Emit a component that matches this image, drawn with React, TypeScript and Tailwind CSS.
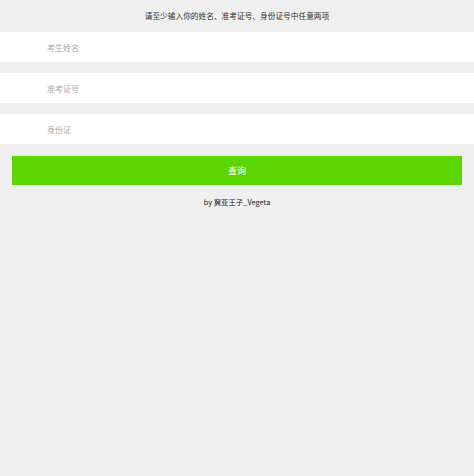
import React from "react";

export default function App() {
  return (
    <div className="min-h-[476px] w-full bg-[#efefef] font-['Noto_Sans_CJK_SC',sans-serif]">
      <div className="flex h-[32px] items-center justify-center text-[7.7px] text-[#333]">
        请至少输入你的姓名、准考证号、身份证号中任意两项
      </div>
      <div className="flex flex-col gap-[11px]">
        {["考生姓名", "准考证号", "身份证"].map((p) => (
          <div key={p} className="flex h-[30px] items-center bg-white pl-[47px] pt-[1px]">
            <input
              className="w-full bg-transparent text-[8px] text-[#333] outline-none placeholder:text-[#aaa] font-['Noto_Sans_CJK_SC',sans-serif]"
              placeholder={p}
            />
          </div>
        ))}
      </div>
      <div className="px-[12px] pt-[12px]">
        <button className="flex h-[29px] w-full items-center justify-center bg-[#5cd600] pt-[1px] text-[9px] text-white font-['Noto_Sans_CJK_SC',sans-serif]">
          查询
        </button>
      </div>
      <div className="flex h-[34px] items-center justify-center text-[7.4px] text-[#222]">
        by 冀亚王子_Vegeta
      </div>
    </div>
  );
}
